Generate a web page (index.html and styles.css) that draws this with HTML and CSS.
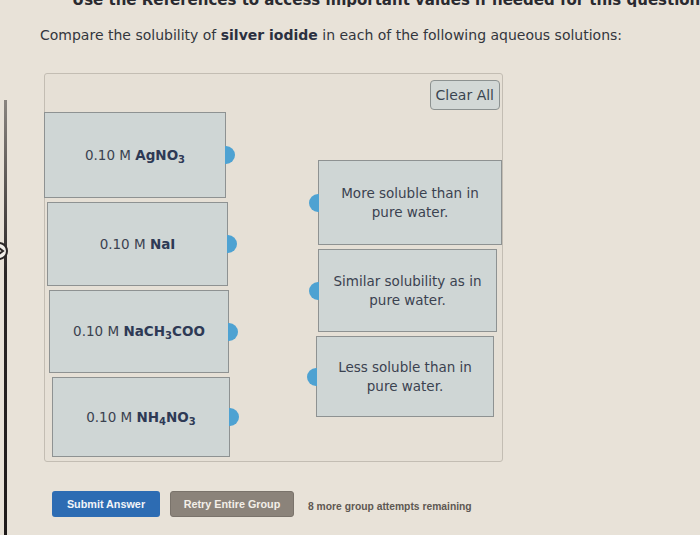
FILE: index.html
```html
<!DOCTYPE html>
<html>
<head>
<meta charset="utf-8">
<link rel="stylesheet" href="styles.css">
</head>
<body>
<div class="edge"><span class="edge-knob"><svg width="10" height="10" viewBox="0 0 10 10"><path d="M3 2 L7 5 L3 8" fill="none" stroke="#2a2626" stroke-width="2"/></svg></span></div>
<div class="top-note">Use the References to access important values if needed for this question.</div>
<p class="title">Compare the solubility of <b>silver iodide</b> in each of the following aqueous solutions:</p>
<div class="panel">
  <div class="panel-head"><button class="clear">Clear All</button></div>
  <div class="board">
    <div class="col col-left">
      <div class="card card-l c1"><span>0.10 M <b>AgNO<sub>3</sub></b></span></div>
      <div class="card card-l c2"><span>0.10 M <b>NaI</b></span></div>
      <div class="card card-l c3"><span>0.10 M <b>NaCH<sub>3</sub>COO</b></span></div>
      <div class="card card-l c4"><span>0.10 M <b>NH<sub>4</sub>NO<sub>3</sub></b></span></div>
    </div>
    <div class="col col-right">
      <div class="card card-r r1"><span>More soluble than in<br>pure water.</span></div>
      <div class="card card-r r2"><span>Similar solubility as in<br>pure water.</span></div>
      <div class="card card-r r3"><span>Less soluble than in<br>pure water.</span></div>
    </div>
  </div>
</div>
<div class="actions">
  <button class="btn submit">Submit Answer</button>
  <button class="btn retry">Retry Entire Group</button>
  <span class="remaining">8 more group attempts remaining</span>
</div>
</body>
</html>
```
FILE: styles.css
```css
html, body {
  margin: 0;
  padding: 0;
}
body {
  width: 700px;
  height: 535px;
  overflow: hidden;
  background: #e8e2d8;
  font-family: "DejaVu Sans", Verdana, sans-serif;
  color: #2f3540;
  position: relative;
}
.edge {
  position: absolute;
  left: 4px;
  top: 100px;
  width: 3px;
  height: 435px;
  background: linear-gradient(#8a8580, #2a2626 40%, #1e1a1a);
}
.edge-knob {
  position: absolute;
  left: -14px;
  top: 142px;
  width: 18px;
  height: 18px;
  border-radius: 50%;
  background: #f2efea;
  border: 2px solid #2a2626;
  box-sizing: border-box;
  display: flex;
  align-items: center;
  justify-content: flex-end;
}
.top-note {
  height: 7px;
  overflow: hidden;
  white-space: nowrap;
  text-align: right;
  margin-right: -6px;
  font-size: 15px;
  font-weight: bold;
  line-height: 0;
  color: #2a2a30;
}
.title {
  margin: 18px 0 0 40px;
  font-size: 14px;
  line-height: 20px;
  color: #33363d;
}
.title b {
  color: #2b3040;
}
.panel {
  margin: 28px 0 0 44px;
  width: 459px;
  height: 389px;
  border: 1px solid #c3bdb3;
  border-radius: 3px;
  background: #e6e0d6;
  box-sizing: border-box;
}
.panel-head {
  display: flex;
  justify-content: flex-end;
  padding: 6px 2px 0 0;
}
.clear {
  font-family: "DejaVu Sans", Verdana, sans-serif;
  font-size: 14px;
  color: #3a4550;
  background: #d2d8d6;
  border: 1px solid #8c9291;
  border-radius: 4px;
  height: 30px;
  padding: 0 5px;
}
.board {
  display: flex;
  margin-top: 2px;
}
.col {
  display: flex;
  flex-direction: column;
  gap: 4px;
}
.col-left {
  margin-left: -1px;
}
.col-right {
  margin-left: 88px;
  margin-top: 48px;
}
.card {
  position: relative;
  box-sizing: border-box;
  width: 182px;
  height: 84px;
  background: #cfd6d5;
  border: 1px solid #8e9292;
  display: flex;
  align-items: center;
  justify-content: center;
  text-align: center;
  font-size: 13.5px;
  line-height: 19px;
  color: #3b4250;
}
.card b {
  color: #2e3a55;
}
.card sub {
  font-size: 10px;
  line-height: 0;
  vertical-align: -3px;
}
.c1 { height: 86px; }
.c2 { margin-left: 3px; width: 181px; }
.c3 { margin-left: 5px; width: 180px; height: 83px; }
.c4 { margin-left: 8px; width: 178px; height: 80px; }
.r1 { width: 184px; height: 85px; }
.r2 { width: 179px; height: 83px; }
.r3 { margin-left: -2px; width: 178px; height: 81px; }
.card-l::after {
  content: "";
  position: absolute;
  right: -10px;
  top: 50%;
  margin-top: -9px;
  width: 10px;
  height: 18px;
  border-radius: 0 9px 9px 0;
  background: #4ea2d2;
}
.card-r::before {
  content: "";
  position: absolute;
  left: -10px;
  top: 50%;
  margin-top: -9px;
  width: 10px;
  height: 18px;
  border-radius: 9px 0 0 9px;
  background: #4ea2d2;
}
.actions {
  display: flex;
  align-items: center;
  margin: 29px 0 0 52px;
}
.btn {
  height: 26px;
  border-radius: 3px;
  border: none;
  font-family: "Liberation Sans", Arial, sans-serif;
  font-weight: bold;
  font-size: 10.8px;
  padding: 0;
}
.submit {
  width: 108px;
  background: #2d6cb3;
  color: #f2f4f8;
}
.retry {
  width: 124px;
  margin-left: 10px;
  background: #8b837a;
  color: #f3efe8;
  border: 1px solid #7a736b;
}
.remaining {
  margin-left: 14px;
  font-family: "Liberation Sans", Arial, sans-serif;
  font-weight: bold;
  font-size: 10.3px;
  color: #5e5852;
  margin-top: 4px;
}
```
